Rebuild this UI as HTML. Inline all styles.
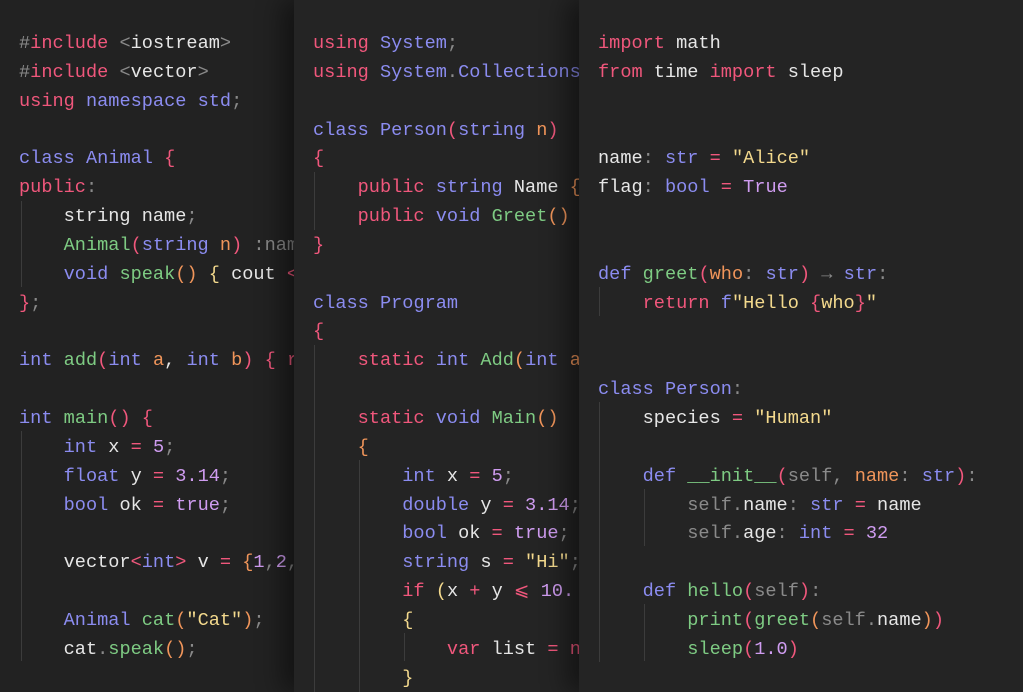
<!DOCTYPE html><html><head><meta charset="utf-8"><style>
body{margin:0;width:1023px;height:692px;overflow:hidden;background:#232323;font-family:"Liberation Mono","DejaVu Sans Mono",monospace;}
.pn{position:absolute;top:0;height:692px;background:#242424;overflow:hidden}
.pn pre{margin:0;position:absolute;left:19px;top:30px;font:18.6px/28.85px "Liberation Mono",monospace;color:#e6e6e6;white-space:pre}
.gd{position:absolute;width:1px;background:#3c3c3c}
.k{color:#f0577c}.p{color:#8b8cf0}.g{color:#7ecb83}.o{color:#f0955a}.y{color:#f3d98d}.n{color:#cf9cf0}.c{color:#8a8a8a}
</style></head><body>
<div class="pn" style="left:0;width:1023px;background:#222">
<div class="gd" style="left:21px;top:201px;height:86px"></div>
<div class="gd" style="left:21px;top:431px;height:230px"></div>
<pre><span class="c">#</span><span class="k">include</span> <span class="c">&lt;</span>iostream<span class="c">&gt;</span>
<span class="c">#</span><span class="k">include</span> <span class="c">&lt;</span>vector<span class="c">&gt;</span>
<span class="k">using</span> <span class="p">namespace</span> <span class="p">std</span><span class="c">;</span>

<span class="p">class</span> <span class="p">Animal</span> <span class="k">{</span>
<span class="k">public</span><span class="c">:</span>
    string name<span class="c">;</span>
    <span class="g">Animal</span><span class="k">(</span><span class="p">string</span> <span class="o">n</span><span class="k">)</span> <span class="c">:</span><span class="c">nam</span>
    <span class="p">void</span> <span class="g">speak</span><span class="o">()</span> <span class="y">{</span> cout <span class="k">&lt;</span>
<span class="k">}</span><span class="c">;</span>

<span class="p">int</span> <span class="g">add</span><span class="k">(</span><span class="p">int</span> <span class="o">a</span>, <span class="p">int</span> <span class="o">b</span><span class="k">)</span> <span class="k">{</span> <span class="k">r</span>

<span class="p">int</span> <span class="g">main</span><span class="k">()</span> <span class="k">{</span>
    <span class="p">int</span> x <span class="k">=</span> <span class="n">5</span><span class="c">;</span>
    <span class="p">float</span> y <span class="k">=</span> <span class="n">3.14</span><span class="c">;</span>
    <span class="p">bool</span> ok <span class="k">=</span> <span class="n">true</span><span class="c">;</span>

    vector<span class="k">&lt;</span><span class="p">int</span><span class="k">&gt;</span> v <span class="k">=</span> <span class="o">{</span><span class="n">1</span><span class="c">,</span><span class="n">2</span><span class="c">,</span>

    <span class="p">Animal</span> <span class="g">cat</span><span class="o">(</span><span class="y">"Cat"</span><span class="o">)</span><span class="c">;</span>
    cat<span class="c">.</span><span class="g">speak</span><span class="o">()</span><span class="c">;</span></pre>
</div>
<div class="pn" style="left:294px;width:729px;box-shadow:-12px 0 24px rgba(0,0,0,.45)">
<div class="gd" style="left:20px;top:172px;height:58px"></div>
<div class="gd" style="left:20px;top:345px;height:347px"></div>
<div class="gd" style="left:65px;top:460px;height:232px"></div>
<div class="gd" style="left:110px;top:633px;height:28px"></div>
<pre><span class="k">using</span> <span class="p">System</span><span class="c">;</span>
<span class="k">using</span> <span class="p">System</span><span class="c">.</span><span class="p">Collections</span>

<span class="p">class</span> <span class="p">Person</span><span class="k">(</span><span class="p">string</span> <span class="o">n</span><span class="k">)</span>
<span class="k">{</span>
    <span class="k">public</span> <span class="p">string</span> Name <span class="o">{</span>
    <span class="k">public</span> <span class="p">void</span> <span class="g">Greet</span><span class="o">()</span>
<span class="k">}</span>

<span class="p">class</span> <span class="p">Program</span>
<span class="k">{</span>
    <span class="k">static</span> <span class="p">int</span> <span class="g">Add</span><span class="o">(</span><span class="p">int</span> <span class="o">a</span>

    <span class="k">static</span> <span class="p">void</span> <span class="g">Main</span><span class="o">()</span>
    <span class="o">{</span>
        <span class="p">int</span> x <span class="k">=</span> <span class="n">5</span><span class="c">;</span>
        <span class="p">double</span> y <span class="k">=</span> <span class="n">3.14</span><span class="c">;</span>
        <span class="p">bool</span> ok <span class="k">=</span> <span class="n">true</span><span class="c">;</span>
        <span class="p">string</span> s <span class="k">=</span> <span class="y">"Hi"</span><span class="c">;</span>
        <span class="k">if</span> <span class="y">(</span>x <span class="k">+</span> y <span class="k">⩽</span> <span class="n">10.</span>
        <span class="y">{</span>
            <span class="k">var</span> list <span class="k">=</span> <span class="k">n</span>
        <span class="y">}</span></pre>
</div>
<div class="pn" style="left:579px;width:444px;box-shadow:-12px 0 24px rgba(0,0,0,.45)">
<div class="gd" style="left:20px;top:287px;height:29px"></div>
<div class="gd" style="left:20px;top:402px;height:260px"></div>
<div class="gd" style="left:65px;top:489px;height:57px"></div>
<div class="gd" style="left:65px;top:604px;height:57px"></div>
<pre><span class="k">import</span> math
<span class="k">from</span> time <span class="k">import</span> sleep


name<span class="c">:</span> <span class="p">str</span> <span class="k">=</span> <span class="y">"Alice"</span>
flag<span class="c">:</span> <span class="p">bool</span> <span class="k">=</span> <span class="n">True</span>


<span class="p">def</span> <span class="g">greet</span><span class="k">(</span><span class="o">who</span><span class="c">:</span> <span class="p">str</span><span class="k">)</span> <span class="c">→</span> <span class="p">str</span><span class="c">:</span>
    <span class="k">return</span> <span class="p">f</span><span class="y">"Hello </span><span class="k">{</span><span class="y">who</span><span class="k">}</span><span class="y">"</span>


<span class="p">class</span> <span class="p">Person</span><span class="c">:</span>
    species <span class="k">=</span> <span class="y">"Human"</span>

    <span class="p">def</span> <span class="g">__init__</span><span class="k">(</span><span class="c">self,</span> <span class="o">name</span><span class="c">:</span> <span class="p">str</span><span class="k">)</span><span class="c">:</span>
        <span class="c">self.</span>name<span class="c">:</span> <span class="p">str</span> <span class="k">=</span> name
        <span class="c">self.</span>age<span class="c">:</span> <span class="p">int</span> <span class="k">=</span> <span class="n">32</span>

    <span class="p">def</span> <span class="g">hello</span><span class="k">(</span><span class="c">self</span><span class="k">)</span><span class="c">:</span>
        <span class="g">print</span><span class="k">(</span><span class="g">greet</span><span class="o">(</span><span class="c">self.</span>name<span class="o">)</span><span class="k">)</span>
        <span class="g">sleep</span><span class="k">(</span><span class="n">1.0</span><span class="k">)</span></pre>
</div>
</body></html>
